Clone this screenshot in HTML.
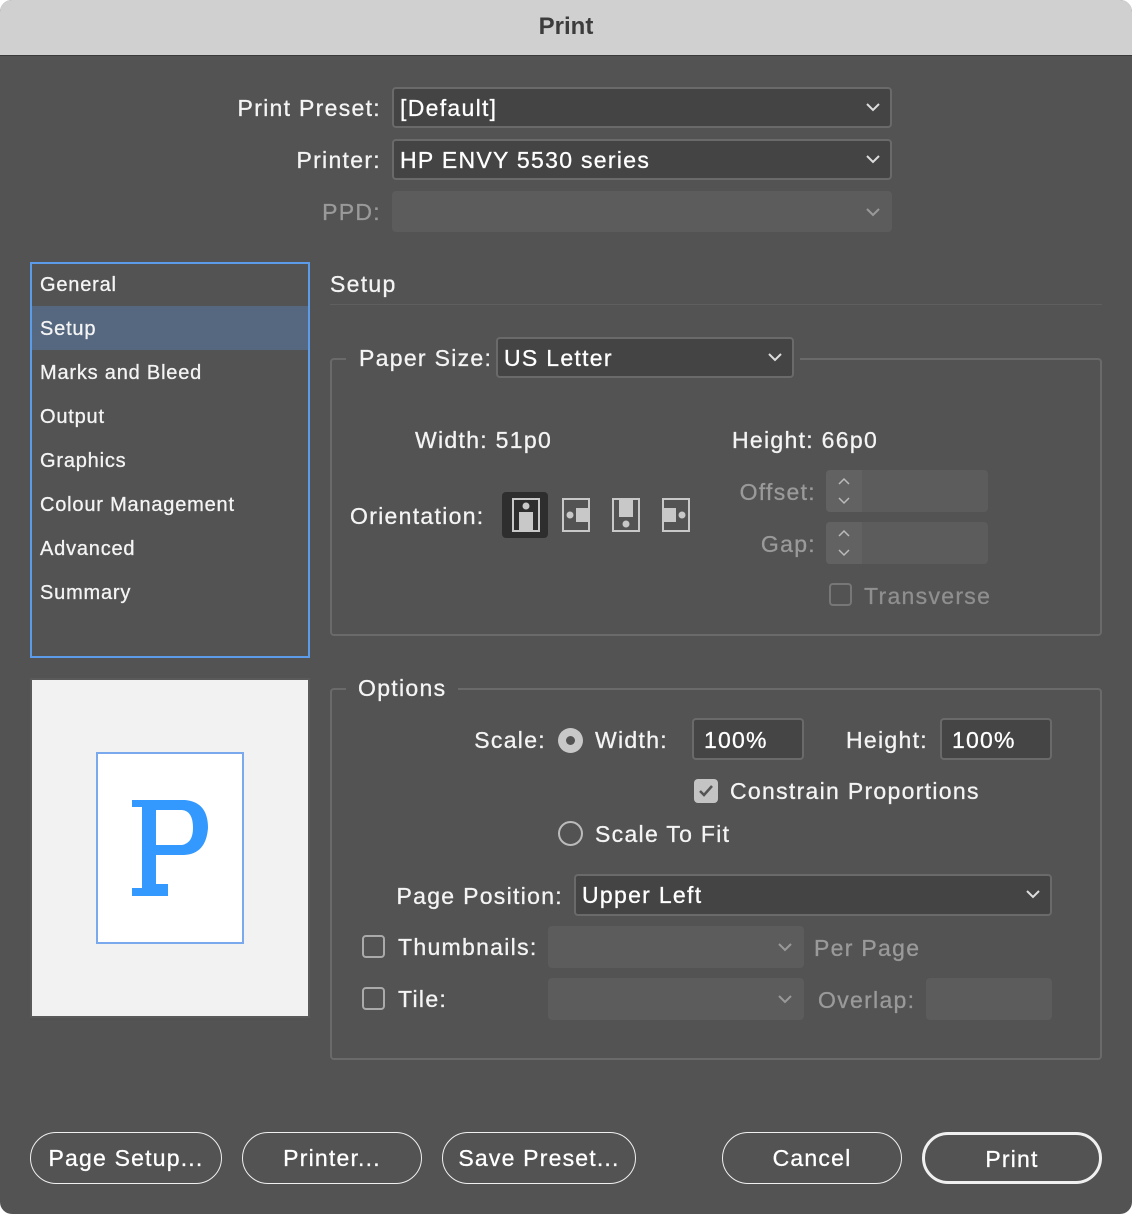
<!DOCTYPE html>
<html><head><meta charset="utf-8"><style>
*{margin:0;padding:0;box-sizing:border-box}
body{width:1132px;height:1214px;background:#fff;overflow:hidden;font-family:"Liberation Sans",sans-serif}
.win{position:absolute;left:0;top:0;width:1132px;height:1214px;background:#535353;border-radius:12px;overflow:hidden}
.title{position:absolute;left:0;top:0;width:1132px;height:56px;background:#d0d0d0;border-bottom:1px solid #3a3a3a;text-align:center;line-height:54px;font-size:24px;font-weight:bold;color:#3c3c3c}
.t{position:absolute;white-space:nowrap;font-size:23px;letter-spacing:1.3px;color:#f4f4f4;line-height:40px;-webkit-text-stroke:0.3px currentColor}
.r{text-align:right}
.dis{color:#9a9a9a}
.dd{position:absolute;background:#444;border:2px solid #6a6a6a;border-radius:4px;color:#fff;font-size:23px;letter-spacing:1.3px;line-height:38px;padding-left:6px;-webkit-text-stroke:0.3px currentColor;white-space:nowrap}
.ddd{position:absolute;background:#5c5c5c;border-radius:4px}
.chev{position:absolute;right:10px;top:13px}
.fs{position:absolute;border:2px solid #6a6a6a;border-radius:4px}
.btn{position:absolute;border:2px solid #f0f0f0;border-radius:26px;height:52px;top:1132px;color:#fff;font-size:23px;letter-spacing:1.2px;line-height:50px;text-align:center;-webkit-text-stroke:0.3px currentColor}
.cb{position:absolute;width:23px;height:23px;border:2px solid #aaa;border-radius:4px}
.nav{position:absolute;left:40px;font-size:20px;letter-spacing:0.8px;color:#f4f4f4;line-height:44px;-webkit-text-stroke:0.3px currentColor}
.fld{position:absolute;width:112px;height:42px;background:#454545;border:2px solid #6a6a6a;border-radius:4px;color:#fff;font-size:23px;letter-spacing:1.2px;line-height:40px;padding-left:10px;-webkit-text-stroke:0.3px currentColor}
</style></head><body>
<div class="win">
<div class="title">Print</div>

<div class="t r" style="left:180px;width:201px;top:88px">Print Preset:</div>
<div class="t r" style="left:180px;width:201px;top:140px">Printer:</div>
<div class="t r dis" style="left:180px;width:201px;top:192px">PPD:</div>

<div class="dd" style="left:392px;top:87px;width:500px;height:41px">[Default]<svg class="chev" width="14" height="10"><polyline points="1,2 7,8 13,2" fill="none" stroke="#ddd" stroke-width="2"/></svg></div>
<div class="dd" style="left:392px;top:139px;width:500px;height:41px">HP ENVY 5530 series<svg class="chev" width="14" height="10"><polyline points="1,2 7,8 13,2" fill="none" stroke="#ddd" stroke-width="2"/></svg></div>
<div class="ddd" style="left:392px;top:191px;width:500px;height:41px"><svg class="chev" style="right:12px;top:16px" width="14" height="10"><polyline points="1,2 7,8 13,2" fill="none" stroke="#999" stroke-width="2"/></svg></div>

<div style="position:absolute;left:30px;top:262px;width:280px;height:396px;border:2px solid #5b9be8"></div>
<div style="position:absolute;left:32px;top:306px;width:276px;height:44px;background:#566880"></div>
<div class="nav" style="top:263px">General</div>
<div class="nav" style="top:307px">Setup</div>
<div class="nav" style="top:351px">Marks and Bleed</div>
<div class="nav" style="top:395px">Output</div>
<div class="nav" style="top:439px">Graphics</div>
<div class="nav" style="top:483px">Colour Management</div>
<div class="nav" style="top:527px">Advanced</div>
<div class="nav" style="top:571px">Summary</div>

<div style="position:absolute;left:30px;top:678px;width:280px;height:340px;background:#5a5a5a"></div>
<div style="position:absolute;left:32px;top:680px;width:276px;height:336px;background:#f2f2f2"></div>
<div style="position:absolute;left:96px;top:752px;width:148px;height:192px;background:#fff;border:2px solid #7aa9ee"></div>
<svg style="position:absolute;left:0;top:0" width="320" height="1020"><path fill="#3399ff" fill-rule="evenodd" d="M132 800 H185 Q208 802 208 828 Q206 854 184 855 H156 V884 H168 V896 H132 V888 H142 V807 H132 Z M156 810 V845 H182 Q193 843 193 828 Q193 811 182 810 Z"/></svg>

<div class="t" style="left:330px;top:264px">Setup</div>
<div style="position:absolute;left:330px;top:304px;width:772px;height:1px;background:#5f5f5f"></div>
<div class="fs" style="left:330px;top:358px;width:772px;height:278px"></div>
<div style="position:absolute;left:346px;top:340px;width:454px;height:40px;background:#535353"></div>
<div class="t" style="left:359px;top:338px">Paper Size:</div>
<div class="dd" style="left:496px;top:337px;width:298px;height:41px">US Letter<svg class="chev" width="14" height="10"><polyline points="1,2 7,8 13,2" fill="none" stroke="#ddd" stroke-width="2"/></svg></div>

<div class="t" style="left:415px;top:420px">Width:&nbsp;51p0</div>
<div class="t" style="left:732px;top:420px">Height:&nbsp;66p0</div>
<div class="t" style="left:350px;top:496px">Orientation:</div>
<div style="position:absolute;left:502px;top:492px;width:46px;height:46px;background:#2e2e2e;border-radius:4px"></div>
<svg style="position:absolute;left:500px;top:490px" width="200" height="52">
<g fill="none" stroke="#c8c8c8" stroke-width="2"><rect x="13" y="9" width="26" height="32"/><rect x="63" y="9" width="26" height="32"/><rect x="113" y="9" width="26" height="32"/><rect x="163" y="9" width="26" height="32"/></g>
<g fill="#c8c8c8"><circle cx="26" cy="16" r="3.5"/><path d="M19 22 H33 V41 H19 Z"/>
<circle cx="70" cy="25" r="3.5"/><path d="M76 18 H89 V32 H76 Z"/>
<circle cx="126" cy="34" r="3.5"/><path d="M119 9 H133 V27 H119 Z"/>
<circle cx="182" cy="25" r="3.5"/><path d="M163 18 H176 V32 H163 Z"/></g></svg>

<div class="t r dis" style="left:700px;width:116px;top:472px">Offset:</div>
<div class="t r dis" style="left:700px;width:116px;top:524px">Gap:</div>
<div class="ddd" style="left:826px;top:470px;width:162px;height:42px"><div style="position:absolute;left:0;top:0;width:36px;height:42px;background:#626262;border-radius:4px 0 0 4px"></div><svg style="position:absolute;left:10px;top:6px" width="16" height="30"><polyline points="3,8 8,3 13,8" fill="none" stroke="#bbb" stroke-width="1.5"/><polyline points="3,22 8,27 13,22" fill="none" stroke="#bbb" stroke-width="1.5"/></svg></div>
<div class="ddd" style="left:826px;top:522px;width:162px;height:42px"><div style="position:absolute;left:0;top:0;width:36px;height:42px;background:#626262;border-radius:4px 0 0 4px"></div><svg style="position:absolute;left:10px;top:6px" width="16" height="30"><polyline points="3,8 8,3 13,8" fill="none" stroke="#bbb" stroke-width="1.5"/><polyline points="3,22 8,27 13,22" fill="none" stroke="#bbb" stroke-width="1.5"/></svg></div>
<div class="cb" style="left:829px;top:583px;border-color:#777"></div>
<div class="t dis" style="left:864px;top:576px;color:#8f8f8f">Transverse</div>

<div class="fs" style="left:330px;top:688px;width:772px;height:372px"></div>
<div style="position:absolute;left:346px;top:670px;width:112px;height:40px;background:#535353"></div>
<div class="t" style="left:358px;top:668px">Options</div>
<div class="t r" style="left:440px;width:106px;top:720px">Scale:</div>
<div style="position:absolute;left:558px;top:728px;width:25px;height:25px;border-radius:50%;background:#c8c8c8"><div style="position:absolute;left:8px;top:8px;width:9px;height:9px;border-radius:50%;background:#535353"></div></div>
<div class="t" style="left:595px;top:720px">Width:</div>
<div class="fld" style="left:692px;top:718px">100%</div>
<div class="t" style="left:846px;top:720px">Height:</div>
<div class="fld" style="left:940px;top:718px">100%</div>
<div style="position:absolute;left:694px;top:779px;width:24px;height:24px;background:#c4c4c4;border-radius:4px"><svg width="24" height="24"><polyline points="6,12 10,16 18,7" fill="none" stroke="#555" stroke-width="2.5"/></svg></div>
<div class="t" style="left:730px;top:771px">Constrain Proportions</div>
<div style="position:absolute;left:558px;top:821px;width:25px;height:25px;border-radius:50%;border:2px solid #bbb"></div>
<div class="t" style="left:595px;top:814px">Scale To Fit</div>
<div class="t r" style="left:360px;width:203px;top:876px">Page Position:</div>
<div class="dd" style="left:574px;top:874px;width:478px;height:42px">Upper Left<svg class="chev" width="14" height="10"><polyline points="1,2 7,8 13,2" fill="none" stroke="#ddd" stroke-width="2"/></svg></div>
<div class="cb" style="left:362px;top:935px"></div>
<div class="t" style="left:398px;top:927px">Thumbnails:</div>
<div class="ddd" style="left:548px;top:926px;width:256px;height:42px"><svg class="chev" style="right:12px;top:16px" width="14" height="10"><polyline points="1,2 7,8 13,2" fill="none" stroke="#999" stroke-width="2"/></svg></div>
<div class="t dis" style="left:814px;top:928px">Per Page</div>
<div class="cb" style="left:362px;top:987px"></div>
<div class="t" style="left:398px;top:979px">Tile:</div>
<div class="ddd" style="left:548px;top:978px;width:256px;height:42px"><svg class="chev" style="right:12px;top:16px" width="14" height="10"><polyline points="1,2 7,8 13,2" fill="none" stroke="#999" stroke-width="2"/></svg></div>
<div class="t dis" style="left:818px;top:980px">Overlap:</div>
<div class="ddd" style="left:926px;top:978px;width:126px;height:42px"></div>

<div class="btn" style="left:30px;width:192px;border-width:1.5px">Page Setup...</div>
<div class="btn" style="left:242px;width:180px;border-width:1.5px">Printer...</div>
<div class="btn" style="left:442px;width:194px;border-width:1.5px">Save Preset...</div>
<div class="btn" style="left:722px;width:180px;border-width:1.5px">Cancel</div>
<div class="btn" style="left:922px;width:180px;border-width:3px;line-height:48px">Print</div>
</div>
</body></html>
